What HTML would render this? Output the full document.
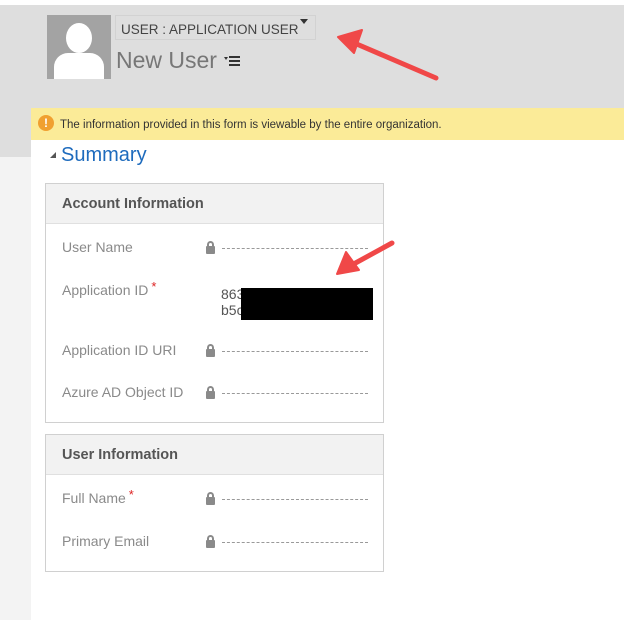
<!DOCTYPE html>
<html><head><style>
*{margin:0;padding:0;box-sizing:border-box}
body{width:624px;height:620px;position:relative;overflow:hidden;background:#fff;font-family:"Liberation Sans",sans-serif}
.a{position:absolute}
.lbl{position:absolute;left:62px;font-size:14px;color:#8a8a8a}
.lock{position:absolute;left:206px;width:9px;height:8px;background:#8a8a8a;border-radius:1px}
.lock:before{content:"";position:absolute;left:1px;top:-5px;width:7px;height:7px;border:2px solid #8a8a8a;border-radius:4px 4px 0 0;box-sizing:border-box}
.dash{position:absolute;left:222px;width:146px;border-top:1px dashed #999}
.star{color:#d22;font-size:13px;position:relative;top:-4px;margin-left:3px}
.box{position:absolute;left:45px;width:339px;border:1px solid #d0d0d0;background:#fff}
.hdr{height:40px;background:#f2f2f2;border-bottom:1px solid #e0e0e0;font-size:14.5px;font-weight:bold;color:#555;padding:12px 0 0 16px}
</style></head><body>
<div class="a" style="left:0;top:5px;width:624px;height:103px;background:#dedede"></div>
<div class="a" style="left:0;top:108px;width:31px;height:49px;background:#dedede"></div>
<div class="a" style="left:0;top:157px;width:31px;height:463px;background:#f3f3f3"></div>
<div class="a" style="left:47px;top:15px;width:64px;height:64px;background:#a3a3a3;overflow:hidden">
<div class="a" style="left:19px;top:8px;width:26px;height:30px;background:#fff;border-radius:50%"></div>
<div class="a" style="left:7px;top:38px;width:50px;height:40px;background:#fff;border-radius:14px 14px 0 0"></div>
</div>
<div class="a" style="left:115px;top:15px;width:201px;height:25px;border:1px solid #d2d2d2;font-size:13.5px;color:#444;padding:6px 0 0 5px;white-space:nowrap">USER : APPLICATION USER</div>
<div class="a" style="left:300px;top:19px;width:0;height:0;border-left:4px solid transparent;border-right:4px solid transparent;border-top:5px solid #333"></div>
<div class="a" style="left:116px;top:47px;font-size:23px;color:#777;white-space:nowrap">New User</div>
<div class="a" style="left:224px;top:56px;width:16px;height:11px">
<div class="a" style="left:0;top:1px;width:0;height:0;border-left:2px solid transparent;border-right:2px solid transparent;border-top:3px solid #333"></div>
<div class="a" style="left:5px;top:0;width:11px;height:2px;background:#333"></div>
<div class="a" style="left:5px;top:4px;width:11px;height:2px;background:#333"></div>
<div class="a" style="left:5px;top:8px;width:11px;height:2px;background:#333"></div>
</div>
<div class="a" style="left:31px;top:108px;width:593px;height:32px;background:#fbeb98"></div>
<div class="a" style="left:38px;top:115px;width:16px;height:16px;border-radius:50%;background:#f0a030;color:#fff;font-size:12px;font-weight:bold;text-align:center;line-height:16px">!</div>
<div class="a" style="left:60px;top:119px;font-size:11.5px;color:#333">The information provided in this form is viewable by the entire organization.</div>
<div class="a" style="left:50px;top:152px;width:0;height:0;border-left:6px solid transparent;border-bottom:6px solid #555"></div>
<div class="a" style="left:61px;top:144px;font-size:20px;color:#1e6bbd">Summary</div>
<div class="box" style="top:183px;height:240px"><div class="hdr">Account Information</div></div>
<div class="lbl" style="top:239px">User Name</div><div class="lock" style="top:246px"></div><div class="dash" style="top:248px"></div>
<div class="lbl" style="top:282px">Application ID<span class="star">*</span></div>
<div class="a" style="left:221px;top:286px;font-size:14px;color:#555;line-height:16px">863<br>b5c</div>
<div class="a" style="left:241px;top:288px;width:132px;height:32px;background:#000"></div>
<div class="lbl" style="top:342px">Application ID URI</div><div class="lock" style="top:349px"></div><div class="dash" style="top:351px"></div>
<div class="lbl" style="top:384px">Azure AD Object ID</div><div class="lock" style="top:391px"></div><div class="dash" style="top:393px"></div>
<div class="box" style="top:434px;height:138px"><div class="hdr">User Information</div></div>
<div class="lbl" style="top:490px">Full Name<span class="star">*</span></div><div class="lock" style="top:497px"></div><div class="dash" style="top:499px"></div>
<div class="lbl" style="top:533px">Primary Email</div><div class="lock" style="top:540px"></div><div class="dash" style="top:542px"></div>
<svg class="a" style="left:0;top:0" width="624" height="620">
<g stroke="#f04848" stroke-width="5" stroke-linecap="round" fill="#f04848">
<line x1="436" y1="78" x2="352" y2="42"/>
<polygon points="338,37 362,30 354,53" stroke-width="2" stroke-linejoin="round"/>
<line x1="392" y1="243" x2="350" y2="266"/>
<polygon points="337,274 346,252 359,270" stroke-width="2" stroke-linejoin="round"/>
</g></svg>
</body></html>
